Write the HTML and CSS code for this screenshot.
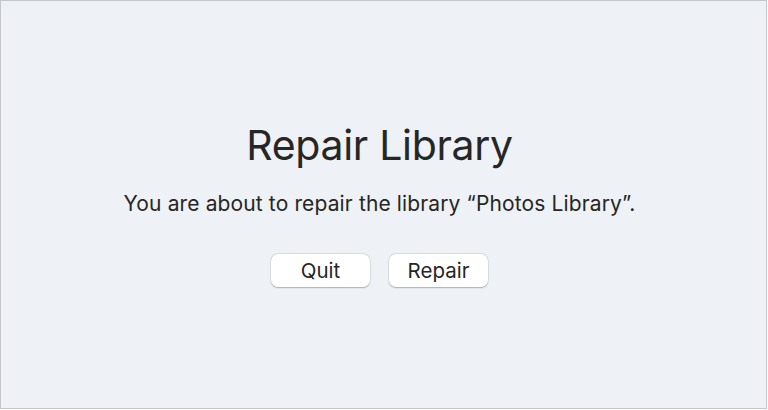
FILE: index.html
```html
<!DOCTYPE html>
<html>
<head>
<meta charset="utf-8">
<link rel="stylesheet" href="styles.css">
</head>
<body>
<div class="window">
  <div class="dialog">
    <h1 class="title">Repair Library</h1>
    <p class="message">You are about to repair the library “Photos Library”.</p>
    <div class="actions">
      <button class="btn">Quit</button>
      <button class="btn">Repair</button>
    </div>
  </div>
</div>
</body>
</html>
```

FILE: styles.css
```css
html, body {
  margin: 0;
  padding: 0;
  width: 768px;
  height: 410px;
  background: #ffffff;
}
.window {
  box-sizing: border-box;
  width: 767px;
  height: 409px;
  background: #eef1f5;
  border: 1px solid #c4c6c9;
  padding: 119px 8px 0 0;
  font-family: Inter, "Liberation Sans", sans-serif;
  color: #262626;
}
.dialog {
  display: flex;
  flex-direction: column;
  align-items: center;
}
.title {
  margin: 0;
  font-size: 41px;
  font-weight: 400;
  line-height: 50px;
  letter-spacing: -0.3px;
}
.message {
  margin: 21px 0 0;
  font-size: 21px;
  line-height: 26px;
  font-weight: 400;
  letter-spacing: 0.13px;
}
.actions {
  display: flex;
  gap: 19px;
  margin-top: 37px;
}
.btn {
  width: 99px;
  height: 33px;
  border: none;
  border-radius: 7px;
  background: #ffffff;
  box-shadow: 0 0.5px 1.5px rgba(0,0,0,0.25), 0 0 0 0.5px rgba(0,0,0,0.08);
  font-family: Inter, "Liberation Sans", sans-serif;
  font-size: 20.5px;
  color: #262626;
  padding: 0;
}
```
